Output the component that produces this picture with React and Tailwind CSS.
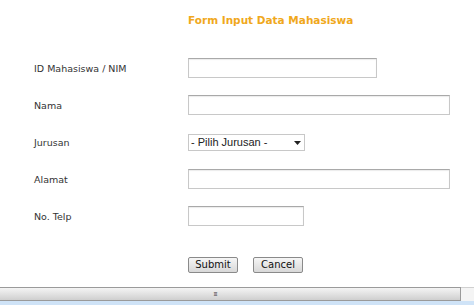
const label = "pt-[2px] text-[9.5px] text-[#333] font-['DejaVu_Sans',Verdana,sans-serif]";
const input = "h-[20px] border border-[#c8c8c8] border-t-[#a9a9a9] bg-white shadow-[inset_0_1px_1px_rgba(0,0,0,0.08)]";

function Row({ name, children, className = "" }) {
  return (
    <div className={`flex items-center ${className}`}>
      <div className={`w-[188px] shrink-0 pl-[34px] ${label}`}>{name}</div>
      {children}
    </div>
  );
}

function Button({ children }) {
  return (
    <button
      type="button"
      className="h-[16px] w-[50px] rounded-[2px] border border-[#8a8a8a] bg-gradient-to-b from-[#f6f6f6] to-[#d8d8d8] text-[10px] leading-none text-[#111] font-['DejaVu_Sans',Verdana,sans-serif]"
    >
      {children}
    </button>
  );
}

export default function App() {
  return (
    <div className="relative h-[305px] w-[474px] overflow-hidden bg-white">
      <div className="h-[42px] pl-[188px] pt-[13px] text-[10.5px] font-bold text-[#f0a81c] font-['DejaVu_Sans',Verdana,sans-serif]">
        Form Input Data Mahasiswa
      </div>

      <Row name="ID Mahasiswa / NIM" className="mt-[16px]">
        <div className={`${input} w-[189px]`} />
      </Row>
      <Row name="Nama" className="mt-[17px]">
        <div className={`${input} w-[262px]`} />
      </Row>
      <Row name="Jurusan" className="mt-[19px]">
        <div className="flex h-[17px] w-[117px] items-center justify-between border border-[#c8c8c8] bg-white pl-[2px] pr-[3px] text-[11px] text-[#222] font-['Liberation_Sans',Arial,sans-serif]">
          <span>- Pilih Jurusan -</span>
          <svg width="7" height="4" viewBox="0 0 7 4">
            <path d="M0 0h7L3.5 4z" fill="#222" />
          </svg>
        </div>
      </Row>
      <Row name="Alamat" className="mt-[18px]">
        <div className={`${input} w-[262px]`} />
      </Row>
      <Row name="No. Telp" className="mt-[17px]">
        <div className={`${input} w-[116px]`} />
      </Row>

      <div className="mt-[31px] flex gap-[15px] pl-[188px]">
        <Button>Submit</Button>
        <Button>Cancel</Button>
      </div>

      <div className="absolute bottom-0 left-0 right-0">
        <div className="flex h-[14px]">
          <div className="flex flex-1 items-center justify-center border-y border-r border-[#9a9a9a] bg-gradient-to-b from-[#f4f4f4] via-[#e2e2e2] to-[#cfcfcf]">
            <span className="-ml-[30px] text-[6px] leading-none tracking-[-1px] text-[#666]">III</span>
          </div>
          <div className="w-[13px] border-t border-[#d0d0d0] bg-[#f4f4f4]" />
        </div>
        <div className="h-[4px] bg-[#cfe3f7]" />
      </div>
    </div>
  );
}
